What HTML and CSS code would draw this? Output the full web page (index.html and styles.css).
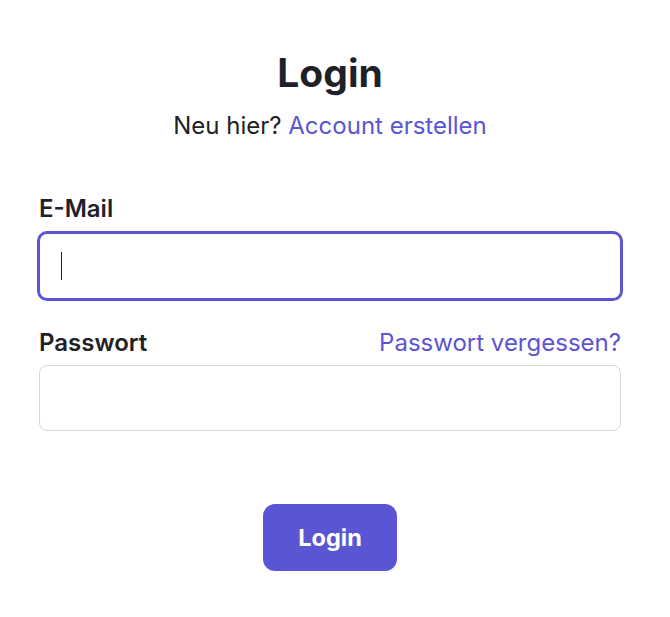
FILE: index.html
```html
<!DOCTYPE html>
<html lang="de">
<head>
<meta charset="utf-8">
<title>Login</title>
<link rel="stylesheet" href="styles.css">
</head>
<body>
<main class="page">
  <h1 class="title">Login</h1>
  <p class="subtitle">Neu hier? <a class="link" href="#">Account erstellen</a></p>
  <form class="form">
    <div class="field">
      <label class="label" for="email">E-Mail</label>
      <div class="input input-focus"><span class="caret"></span></div>
    </div>
    <div class="field field-pw">
      <div class="label-row">
        <label class="label" for="pw">Passwort</label>
        <a class="link" href="#">Passwort vergessen?</a>
      </div>
      <div class="input"></div>
    </div>
    <div class="actions">
      <button class="button" type="button">Login</button>
    </div>
  </form>
</main>
</body>
</html>
```
FILE: styles.css
```css
* { box-sizing: border-box; }
html, body { margin: 0; padding: 0; background: #ffffff; }
body {
  font-family: Inter, "Noto Sans", "Liberation Sans", sans-serif;
  color: #1f2128;
}
.page {
  padding: 49px 49px 0 39px;
  display: flex;
  flex-direction: column;
}
.title {
  margin: 0;
  text-align: center;
  font-size: 39px;
  line-height: 48px;
  font-weight: 700;
  color: #1f2128;
}
.subtitle {
  margin: 13px 0 0;
  text-align: center;
  font-size: 24px;
  line-height: 32px;
  color: #1f2128;
}
.link {
  color: #5a55d3;
  text-decoration: none;
}
.form {
  margin-top: 51px;
  display: flex;
  flex-direction: column;
}
.field {
  display: flex;
  flex-direction: column;
  gap: 8px;
}
.field-pw { margin-top: 28px; gap: 6px; }
.label-row {
  display: flex;
  justify-content: space-between;
  align-items: baseline;
}
.label-row .link {
  font-size: 24px;
  line-height: 32px;
}
.label {
  font-size: 24px;
  line-height: 32px;
  font-weight: 600;
  color: #1f2128;
}
.input {
  height: 66px;
  border: 1px solid #d6d8dd;
  border-radius: 8px;
  background: #fff;
  display: flex;
  align-items: center;
  padding-left: 21px;
}
.input-focus {
  border-color: #5a55d3;
  box-shadow: 0 0 0 2px #5a55d3;
}
.caret {
  width: 1px;
  height: 28px;
  background: #1f2128;
}
.actions {
  margin-top: 73px;
  display: flex;
  justify-content: center;
}
.button {
  width: 134px;
  height: 67px;
  border: none;
  border-radius: 12px;
  background: #5a55d3;
  color: #ffffff;
  font-family: inherit;
  font-size: 23.5px;
  font-weight: 700;
}
```
